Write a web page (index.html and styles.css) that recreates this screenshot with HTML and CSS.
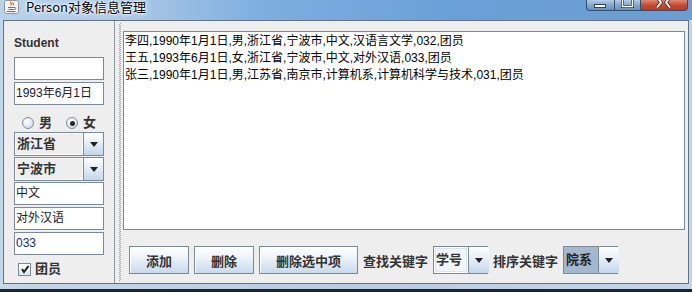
FILE: index.html
```html
<!DOCTYPE html>
<html lang="zh">
<head>
  <meta charset="UTF-8">
  <title>Person对象信息管理</title>
  <link rel="stylesheet" href="styles.css">
</head>
<body>
  <div class="win">
    <div class="titlebar">
      <svg class="app-icon" width="15" height="14" viewBox="0 0 15 14">
        <rect x="0.5" y="0.5" width="14" height="13" rx="2" fill="#f3f3f3" stroke="#8d959c"/>
        <path d="M7 1.8c-1.2 1.1 1.2 2 0 3.6M9.2 2.4c-.8.8.8 1.4 0 2.6" stroke="#e2571e" fill="none" stroke-width="1.2"/>
        <path d="M4 7.5h6.5M4.5 9.5h5.5M3 11.5h8.5" stroke="#4d78a8" stroke-width="1"/>
        <path d="M10.5 7.2c1.6 0 1.6 2.4 0 2.4" stroke="#4d78a8" fill="none"/>
      </svg>
      <span class="title">Person对象信息管理</span>
      <div class="caption">
        <span class="cap cap-min">
          <svg width="28" height="11" viewBox="0 0 28 11"><rect x="8.5" y="4.5" width="11" height="3" fill="#fff" stroke="#2b4463"/></svg>
        </span>
        <span class="cap cap-max">
          <svg width="27" height="11" viewBox="0 0 27 11"><rect x="8.5" y="-2.5" width="10" height="9" fill="none" stroke="#2b4463" stroke-width="3"/><rect x="8.5" y="-2.5" width="10" height="9" fill="none" stroke="#fff" stroke-width="1.4"/></svg>
        </span>
        <span class="cap cap-close">
          <svg width="47" height="11" viewBox="0 0 47 11"><path d="M17 -3l4 5.5-4 5M30 -3l-4 5.5 4 5" stroke="#5a1a10" stroke-width="3.4" fill="none"/><path d="M17 -3l4 5.5-4 5M30 -3l-4 5.5 4 5" stroke="#fff" stroke-width="2" fill="none"/></svg>
        </span>
      </div>
    </div>

    <div class="frame">
      <div class="content">
        <div class="left">
          <div class="student">Student</div>
          <div class="field"></div>
          <div class="field">1993年6月1日</div>
          <div class="radios">
            <span class="radio"></span><span class="opt">男</span>
            <span class="radio checked"></span><span class="opt">女</span>
          </div>
          <div class="combo">
            <span class="combo-text">浙江省</span>
            <span class="combo-arrow"><i class="tri"></i></span>
          </div>
          <div class="combo">
            <span class="combo-text">宁波市</span>
            <span class="combo-arrow"><i class="tri"></i></span>
          </div>
          <div class="field">中文</div>
          <div class="field">对外汉语</div>
          <div class="field num">033</div>
          <div class="check-row">
            <span class="checkbox">
              <svg width="10" height="10" viewBox="0 0 10 10"><path d="M2 5.2l2 2.8 4.5-6" stroke="#1e1e1e" stroke-width="2" fill="none"/></svg>
            </span>
            <span class="opt">团员</span>
          </div>
        </div>

        <div class="divider"><div class="grip"></div></div>

        <div class="right">
          <div class="textarea">
            <div>李四,1990年1月1日,男,浙江省,宁波市,中文,汉语言文学,032,团员</div>
            <div>王五,1993年6月1日,女,浙江省,宁波市,中文,对外汉语,033,团员</div>
            <div>张三,1990年1月1日,男,江苏省,南京市,计算机系,计算机科学与技术,031,团员</div>
          </div>
          <div class="toolbar">
            <button class="btn">添加</button>
            <button class="btn">删除</button>
            <button class="btn">删除选中项</button>
            <span class="label">查找关键字</span>
            <div class="combo combo-sm">
              <span class="combo-text">学号</span>
              <span class="combo-arrow"><i class="tri"></i></span>
            </div>
            <span class="label">排序关键字</span>
            <div class="combo combo-sm focused">
              <span class="combo-text">院系</span>
              <span class="combo-arrow"><i class="tri"></i></span>
            </div>
          </div>
        </div>
      </div>
    </div>
    <div class="desktop"></div>
  </div>
</body>
</html>
```

FILE: styles.css
```css
body {
  margin: 0;
  width: 692px;
  height: 292px;
  overflow: hidden;
  background: #1f242b;
  font-family: "Liberation Sans", "Noto Sans CJK SC", sans-serif;
  color: #333;
}

.win {
  width: 692px;
  height: 292px;
  display: flex;
  flex-direction: column;
}

/* Title bar */
.titlebar {
  height: 20px;
  flex: none;
  display: flex;
  align-items: flex-start;
  padding-left: 4px;
  background: linear-gradient(to right, #bad2ea 0, #abc8e6 130px, #7eaedf 260px, #6aa0d8 450px, #6b9dd1 692px);
}

.app-icon {
  flex: none;
}

.title {
  margin-left: 7px;
  font-family: "Noto Sans CJK SC", sans-serif;
  font-size: 13px;
  line-height: 13px;
  color: #000;
  text-shadow: 0 0 6px #fff, 0 0 3px #fff, 0 0 2px #fff;
}

.caption {
  margin-left: auto;
  margin-right: 4px;
  display: flex;
}

.cap {
  height: 11px;
  box-sizing: border-box;
  border: 1px solid #34506f;
  border-top: none;
  display: flex;
}

.cap-min {
  width: 28px;
  border-right: none;
  border-radius: 0 0 0 4px;
  background: linear-gradient(#b4cce6, #85a8d1 50%, #6a90c0);
}

.cap-max {
  width: 27px;
  background: linear-gradient(#b4cce6, #85a8d1 50%, #6a90c0);
}

.cap-close {
  width: 47px;
  border-left: none;
  border-radius: 0 0 4px 0;
  background: linear-gradient(#dd8a74, #c84b31 50%, #b43c24);
}

.cap svg {
  flex: none;
  margin-left: -1px;
}

/* Window frame */
.frame {
  height: 269px;
  flex: none;
  padding: 0 3px 5px;
  box-sizing: border-box;
  background: linear-gradient(to right, #c4d7eb, #b7cde5 50%, #c3d6ea);
  border-bottom: 0;
}

.desktop {
  height: 3px;
  flex: none;
  background: #1f242b;
}

.content {
  height: 264px;
  box-sizing: border-box;
  border: 1px solid #66737f;
  background: #eeeeee;
  display: flex;
}

/* Left form panel */
.left {
  width: 110px;
  flex: none;
  border-right: 1px solid #8f99a3;
  padding-left: 10px;
  box-sizing: content-box;
  width: 100px;
  display: flex;
  flex-direction: column;
  align-items: flex-start;
}

.student {
  margin-top: 14px;
  margin-bottom: 6px;
  font-size: 12px;
  line-height: 16px;
  font-weight: bold;
  color: #333;
}

.field {
  width: 90px;
  height: 23px;
  box-sizing: border-box;
  border: 1px solid #7a8a99;
  background: #fff;
  margin-bottom: 2px;
  padding-left: 1px;
  font-size: 12px;
  line-height: 21px;
  color: #1c1c28;
  white-space: nowrap;
}

.field.num {
  color: #1a2a6a;
}

.radios {
  height: 14px;
  margin-top: 9px;
  margin-bottom: 2px;
  padding-left: 8px;
  display: flex;
  align-items: center;
}

.radio {
  width: 12px;
  height: 12px;
  box-sizing: border-box;
  border: 1px solid #7d8c9b;
  border-radius: 50%;
  background: radial-gradient(circle at 40% 35%, #ffffff 0, #e8eef5 45%, #c4d3e3 100%);
  display: flex;
  align-items: center;
  justify-content: center;
}

.radio.checked::after {
  content: "";
  width: 5px;
  height: 5px;
  border-radius: 50%;
  background: #2a2a2a;
}

.opt {
  margin-left: 5px;
  margin-right: 14px;
  font-size: 13px;
  line-height: 14px;
  font-weight: bold;
  color: #333;
}

.combo {
  width: 90px;
  height: 24px;
  box-sizing: border-box;
  border: 1px solid #7a8a99;
  margin-bottom: 1px;
  display: flex;
}

.combo-text {
  flex: 1;
  border-right: 1px solid #7a8a99;
  background: #eeeeee;
  box-shadow: inset 1px 1px #fbfbfb, inset -1px -1px #fbfbfb;
  padding-left: 2px;
  font-size: 13px;
  line-height: 22px;
  font-weight: bold;
  color: #333;
  white-space: nowrap;
}

.combo-arrow {
  width: 19px;
  flex: none;
  background: linear-gradient(#fdfeff, #e6eef7 45%, #c4d6ea);
  display: flex;
  align-items: center;
  justify-content: center;
}

.tri {
  width: 0;
  height: 0;
  border-left: 4px solid transparent;
  border-right: 4px solid transparent;
  border-top: 5px solid #222;
}

.check-row {
  margin-top: 5px;
  padding-left: 4px;
  height: 14px;
  display: flex;
  align-items: center;
}

.checkbox {
  width: 13px;
  height: 13px;
  box-sizing: border-box;
  border: 1px solid #7a8a99;
  background: linear-gradient(#ffffff, #dce6f1);
  display: flex;
  align-items: center;
  justify-content: center;
}

.check-row .opt {
  margin-left: 4px;
}

/* Split pane divider */
.divider {
  width: 8px;
  flex: none;
  padding-left: 4px;
  box-sizing: border-box;
}

.grip {
  width: 2px;
  height: 258px;
  margin-top: 2px;
  background: conic-gradient(#9ba6b1 25%, transparent 0 50%, #9ba6b1 0 75%, transparent 0) 0 0 / 2px 2px;
}

/* Right side */
.right {
  flex: 1;
  display: flex;
  flex-direction: column;
}

.textarea {
  width: 562px;
  height: 199px;
  box-sizing: border-box;
  margin-top: 10px;
  border: 1px solid #7a8a99;
  background: #fff;
  padding: 1px 0 0 1px;
  font-size: 12px;
  line-height: 17px;
  color: #000;
  white-space: nowrap;
}

.toolbar {
  margin-top: 16px;
  padding-left: 6px;
  height: 28px;
  display: flex;
  align-items: center;
  gap: 5px;
}

.btn {
  height: 28px;
  padding: 0 16px;
  border: 1px solid #7a8a99;
  background: linear-gradient(#ffffff 0%, #f1f5fa 35%, #c9daec 100%);
  box-shadow: inset 1px 1px #ffffff;
  font-family: "Liberation Sans", "Noto Sans CJK SC", sans-serif;
  font-size: 13px;
  font-weight: bold;
  color: #333;
}

.label {
  font-size: 13px;
  font-weight: bold;
  color: #333;
}

.combo-sm {
  width: 55px;
  height: 28px;
  margin-bottom: 0;
}

.combo-sm .combo-text {
  flex: none;
  width: 32px;
  line-height: 26px;
  background: #f1f4f8;
  box-shadow: inset 0 0 0 1px #ffffff, inset 0 0 0 2px #d9e4ef;
}

.combo-sm .combo-arrow {
  width: 20px;
}

.combo-sm.focused .combo-text {
  background: #a3b8cc;
  box-shadow: none;
  color: #222;
}
```
